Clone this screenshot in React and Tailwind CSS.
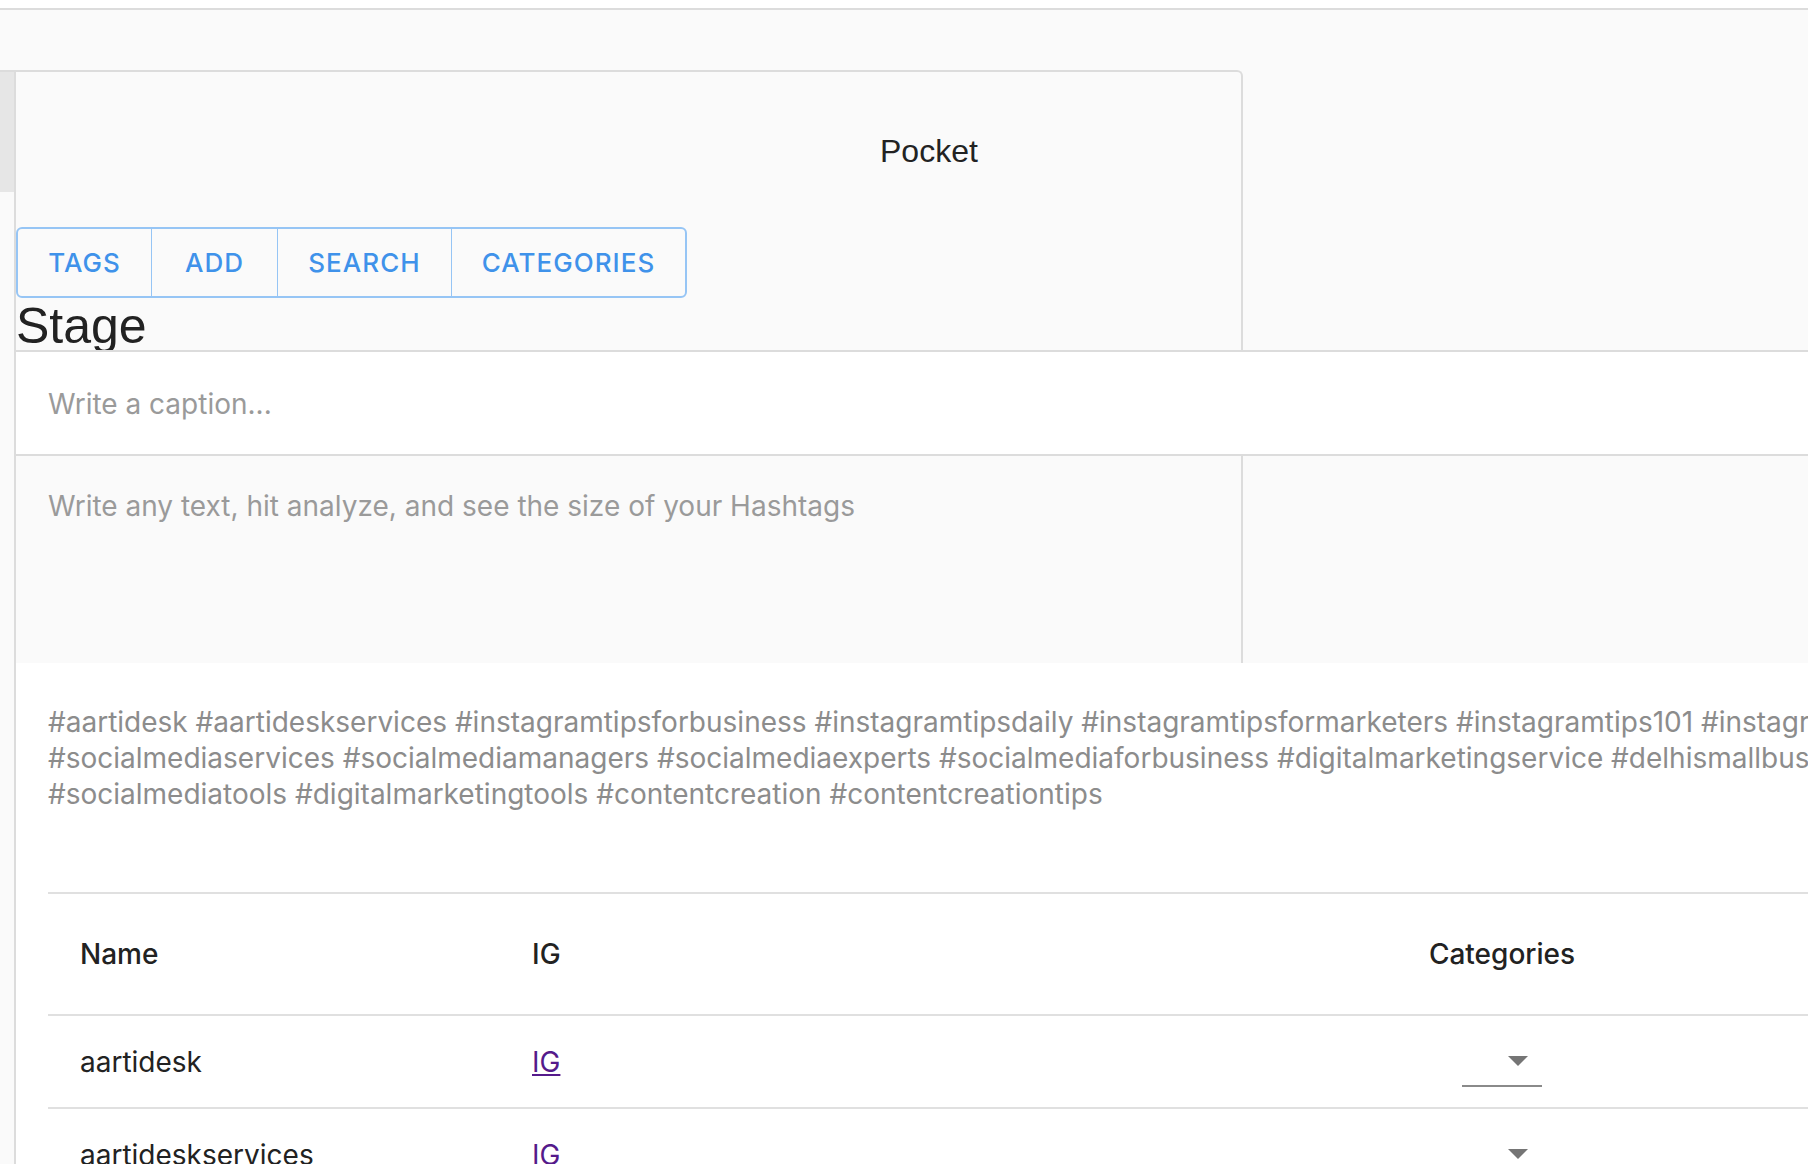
import React from "react";

const lines = [
  "#aartidesk #aartideskservices #instagramtipsforbusiness #instagramtipsdaily #instagramtipsformarketers #instagramtips101 #instagramgrowthtips",
  "#socialmediaservices #socialmediamanagers #socialmediaexperts #socialmediaforbusiness #digitalmarketingservice #delhismallbusiness",
  "#socialmediatools #digitalmarketingtools #contentcreation #contentcreationtips",
];

function Select() {
  return (
    <div className="w-[80px] h-[50px] border-b-2 border-[#8a8a8a] flex items-center justify-end pr-[14px]">
      <svg width="20" height="10" viewBox="0 0 20 10">
        <path d="M0 0 L20 0 L10 10 Z" fill="#757575" />
      </svg>
    </div>
  );
}

function Row({ name, h }) {
  return (
    <div className={`grid grid-cols-[452px_897px_210px] border-b-2 border-[#e0e0e0] items-center ${h}`}>
      <div className="pl-[32px] text-[28px] text-[#222]">{name}</div>
      <div className="pl-[32px] text-[28px]">
        <a href="#" className="text-[#551a8b] underline">IG</a>
      </div>
      <div className="flex justify-center">
        <Select />
      </div>
    </div>
  );
}

export default function App() {
  return (
    <div className="w-[1808px] h-[1164px] overflow-hidden bg-[#fafafa] font-['Inter',sans-serif] text-[#222]">
      <div className="h-[10px] bg-white border-b-2 border-[#dcdcdc]" />
      <div className="h-[60px]" />
      <div className="flex">
        <div className="w-[16px] shrink-0 border-r-2 border-[#dcdcdc]">
          <div className="h-[122px] bg-[#e6e6e6] border-t-2 border-[#dcdcdc]" />
        </div>
        <div className="flex-1 min-w-0">
          <div className="w-[1227px] h-[280px] border-t-2 border-r-2 border-[#dcdcdc] rounded-tr-[6px] overflow-hidden flex flex-col">
            <div className="shrink-0 mt-[60px] pl-[864px] text-[32px] leading-[38px] font-['Liberation_Sans',Arial,sans-serif] text-[#222]">
              Pocket
            </div>
            <div className="shrink-0 mt-[57px] flex h-[71px] w-fit border-2 border-[#96c5f5] rounded-[6px]">
              {[
                ["TAGS", "w-[133px]"],
                ["ADD", "w-[126px] border-l border-[#96c5f5]"],
                ["SEARCH", "w-[174px] border-l border-[#96c5f5]"],
                ["CATEGORIES", "w-[234px] border-l border-[#96c5f5]"],
              ].map(([t, c]) => (
                <div key={t} className={`flex items-center justify-center text-[26px] font-medium tracking-[0.04em] text-[#3f92ea] ${c}`}>
                  {t}
                </div>
              ))}
            </div>
            <div className="shrink-0 mt-[3px] text-[50px] leading-[50px] font-['Liberation_Sans',Arial,sans-serif] text-[#222]">
              Stage
            </div>
          </div>
          <div className="h-[106px] bg-white border-t-2 border-b-2 border-[#dcdcdc] flex items-center pl-[32px] pt-[1px] text-[28px] leading-[34px] text-[#9a9a9a]">
            Write a caption...
          </div>
          <div className="flex h-[207px]">
            <div className="w-[1227px] shrink-0 border-r-2 border-[#dcdcdc] pl-[32px] pt-[33px] text-[28px] leading-[34px] text-[#9a9a9a]">
              Write any text, hit analyze, and see the size of your Hashtags
            </div>
            <div className="flex-1" />
          </div>
          <div className="bg-white pl-[32px] pt-[41px] h-[600px]">
            <div className="text-[28px] leading-[36px] text-[#8c8c8c] whitespace-nowrap">
              {lines.map((l) => (
                <div key={l}>{l}</div>
              ))}
            </div>
            <div className="mt-[80px] border-t-2 border-[#e0e0e0]">
              <div className="grid grid-cols-[452px_897px_210px] border-b-2 border-[#e0e0e0] items-center h-[122px]">
                <div className="pl-[32px] text-[28px] font-medium">Name</div>
                <div className="pl-[32px] text-[28px] font-medium">IG</div>
                <div className="text-center text-[28px] font-medium">Categories</div>
              </div>
              <Row name="aartidesk" h="h-[93px]" />
              <Row name="aartideskservices" h="h-[93px]" />
            </div>
          </div>
        </div>
      </div>
    </div>
  );
}
